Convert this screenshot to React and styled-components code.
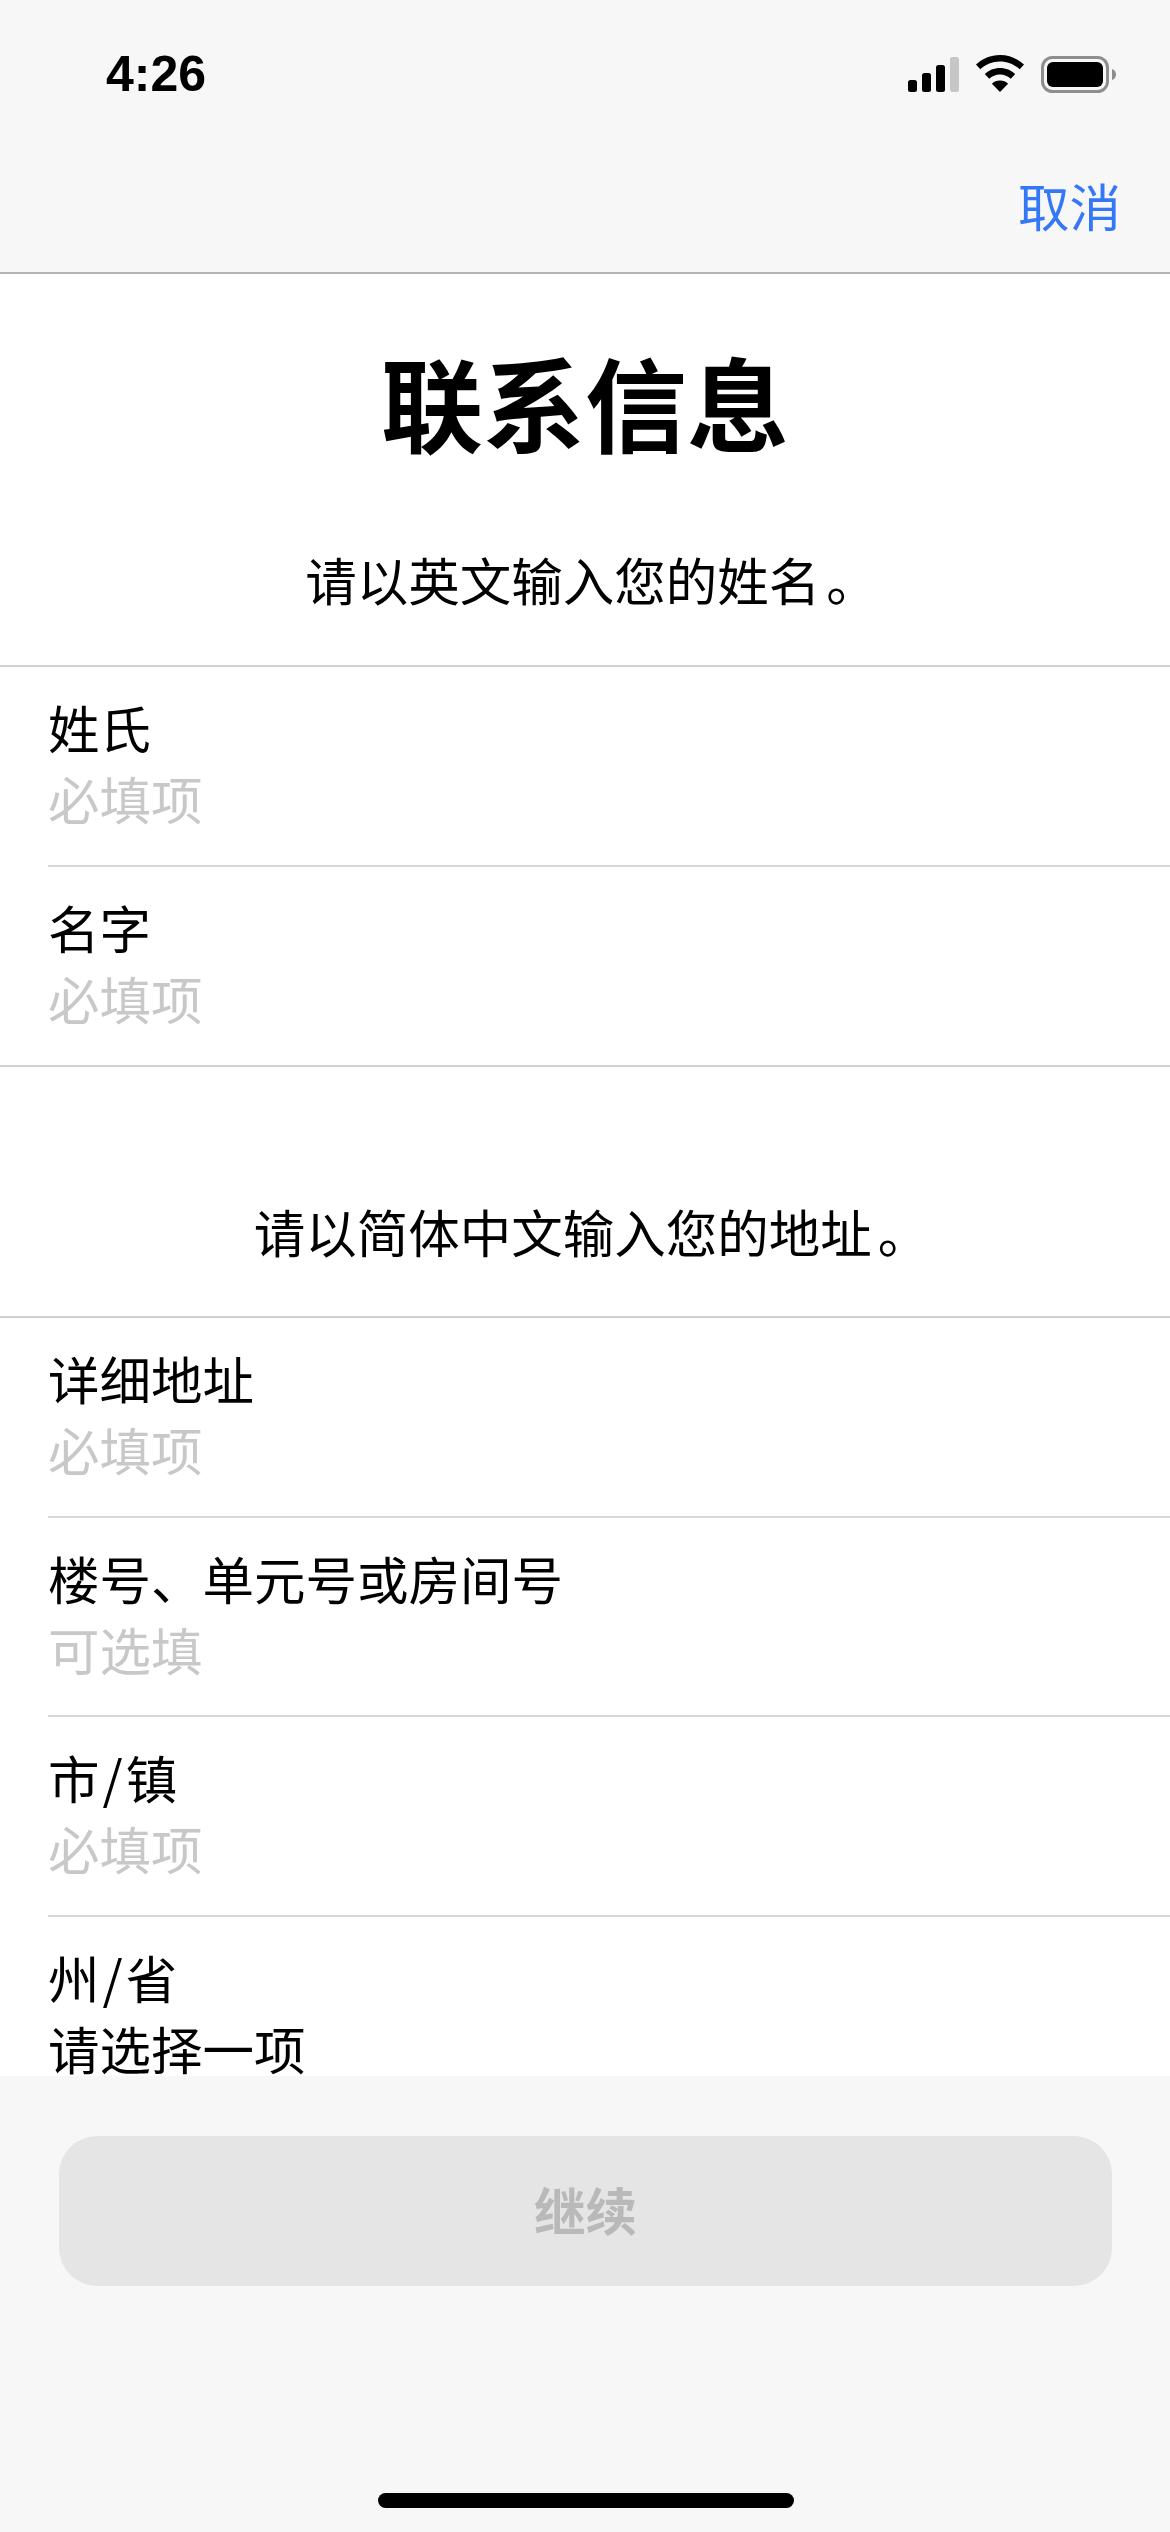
import React from "react";
import styled, { createGlobalStyle } from "styled-components";

const CJK = `"Noto Sans CJK SC", "Noto Sans", sans-serif`;

const GlobalStyle = createGlobalStyle`
  html, body {
    margin: 0;
    padding: 0;
    background: #fff;
  }
  * {
    box-sizing: border-box;
  }
`;

const Screen = styled.div`
  width: 1170px;
  height: 2532px;
  display: flex;
  flex-direction: column;
  overflow: hidden;
  font-family: ${CJK};
  color: #000;
`;

const Header = styled.header`
  height: 274px;
  flex: none;
  background: #f7f7f7;
  border-bottom: 2px solid #b4b4b4;
  display: flex;
  flex-direction: column;
`;

const StatusBar = styled.div`
  height: 170px;
  padding: 51px 54px 0 106px;
  display: flex;
  justify-content: space-between;
  align-items: flex-start;
`;

const Time = styled.div`
  font-family: "Liberation Sans", sans-serif;
  font-weight: 700;
  font-size: 50px;
  line-height: 46px;
`;

const StatusIcons = styled.div`
  display: flex;
  align-items: flex-start;
  margin-top: 6px;
  gap: 17px;
`;

const NavBar = styled.nav`
  display: flex;
  justify-content: flex-end;
  padding-right: 49px;
`;

const Cancel = styled.span`
  font-size: 51.5px;
  line-height: 70px;
  font-weight: 400;
  color: #3478f6;
`;

const Body = styled.main`
  flex: 1;
  min-height: 0;
  overflow: hidden;
  background: #fff;
`;

const Title = styled.h1`
  margin: 0;
  padding-top: 69px;
  text-align: center;
  font-size: 102px;
  line-height: 116px;
  font-weight: 700;
`;

const Hint = styled.p`
  margin: ${(p) => p.$top}px 0 0;
  padding-left: 7px;
  height: 70px;
  text-align: center;
  font-size: 51.5px;
  line-height: 70px;
  font-weight: 400;
`;

// the full stop sits further into its box in the reference
const Stop = styled.span`
  margin: 0 -6px 0 6px;
`;

const Fields = styled.section`
  margin-top: ${(p) => p.$top}px;
  border-top: 2px solid #d0d0d0;
  border-bottom: ${(p) => (p.$open ? "none" : "2px solid #d0d0d0")};
`;

const Row = styled.div`
  padding-left: 48px;
`;

const RowInner = styled.div`
  height: ${(p) => (p.$first ? 198 : 199.5)}px;
  padding-top: 24px;
  border-top: ${(p) => (p.$first ? "none" : "2px solid #d8d8d8")};
`;

const Label = styled.div`
  font-size: 51.5px;
  line-height: 71px;
  font-weight: 400;
`;

const Slash = styled.span`
  margin: 0 3px;
`;

const Placeholder = styled.div`
  font-size: 51.5px;
  line-height: 71px;
  font-weight: 400;
  color: ${(p) => (p.$filled ? "#000" : "#c8c8c8")};
`;

const Footer = styled.footer`
  height: 456px;
  flex: none;
  background: #f7f7f7;
  padding: 60px 58px 0 59px;
  display: flex;
  flex-direction: column;
`;

const Continue = styled.button`
  height: 150px;
  border: none;
  border-radius: 38px;
  background: #e5e5e5;
  color: #b9b9b9;
  font-family: ${CJK};
  font-size: 51.5px;
  font-weight: 700;
  line-height: 1;
  padding: 0 0 4px;
`;

const HomeBar = styled.div`
  width: 416px;
  height: 15px;
  margin: 207px auto 0;
  border-radius: 8px;
  background: #000;
`;

const SignalIcon = () => (
  <svg width="51" height="36" viewBox="0 0 51 36">
    <rect x="0" y="23" width="9" height="12" rx="2.5" fill="#000" />
    <rect x="14" y="16" width="9" height="19" rx="2.5" fill="#000" />
    <rect x="28" y="8" width="9" height="27" rx="2.5" fill="#000" />
    <rect x="42" y="0" width="9" height="35" rx="2.5" fill="#c6c6c6" />
  </svg>
);

const WifiIcon = () => (
  <svg width="48" height="37" viewBox="0 0 48 37" style={{ marginTop: -2 }}>
    <path
      d="M24 0C14.600 0 6.300 3.700 0 9.600l4.300 4.600C9.500 9.400 16.400 6.400 24 6.400s14.500 3 19.700 7.800L48 9.600C41.700 3.700 33.400 0 24 0Z"
      fill="#000"
    />
    <path
      d="M24 13c-5.900 0-11.200 2.300-15.200 6.100l4.400 4.600c2.800-2.700 6.600-4.300 10.800-4.300s8 1.600 10.800 4.300l4.400-4.600C35.200 15.300 29.900 13 24 13Z"
      fill="#000"
    />
    <path d="M24 25.600c-3.200 0-6 1.200-8.100 3.200L24 37l8.100-8.200c-2.100-2-4.900-3.200-8.100-3.200Z" fill="#000" />
  </svg>
);

const BatteryIcon = () => (
  <svg width="75" height="37" viewBox="0 0 75 37" style={{ marginTop: -1 }}>
    <rect x="1.5" y="1.5" width="65" height="34" rx="10" fill="none" stroke="#8e8e8e" strokeWidth="3" />
    <rect x="6" y="6" width="56" height="25" rx="6" fill="#000" />
    <path d="M71 13c2.400.8 4 3 4 5.500s-1.600 4.700-4 5.500Z" fill="#8e8e8e" />
  </svg>
);

const Field = ({ label, hint, first, filled }) => (
  <Row>
    <RowInner $first={first}>
      <Label>{label}</Label>
      <Placeholder $filled={filled}>{hint}</Placeholder>
    </RowInner>
  </Row>
);

const App = () => (
  <Screen>
    <GlobalStyle />
    <Header>
      <StatusBar>
        <Time>4:26</Time>
        <StatusIcons>
          <SignalIcon />
          <WifiIcon />
          <BatteryIcon />
        </StatusIcons>
      </StatusBar>
      <NavBar>
        <Cancel>取消</Cancel>
      </NavBar>
    </Header>
    <Body>
      <Title>联系信息</Title>
      <Hint $top={85}>
        请以英文输入您的姓名<Stop>。</Stop>
      </Hint>
      <Fields $top={51}>
        <Field first label="姓氏" hint="必填项" />
        <Field label="名字" hint="必填项" />
      </Fields>
      <Hint $top={129}>
        请以简体中文输入您的地址<Stop>。</Stop>
      </Hint>
      <Fields $top={50} $open>
        <Field first label="详细地址" hint="必填项" />
        <Field label="楼号、单元号或房间号" hint="可选填" />
        <Field
          label={
            <>
              市<Slash>/</Slash>镇
            </>
          }
          hint="必填项"
        />
        <Field
          label={
            <>
              州<Slash>/</Slash>省
            </>
          }
          hint="请选择一项"
          filled
        />
      </Fields>
    </Body>
    <Footer>
      <Continue disabled>继续</Continue>
      <HomeBar />
    </Footer>
  </Screen>
);

export default App;
